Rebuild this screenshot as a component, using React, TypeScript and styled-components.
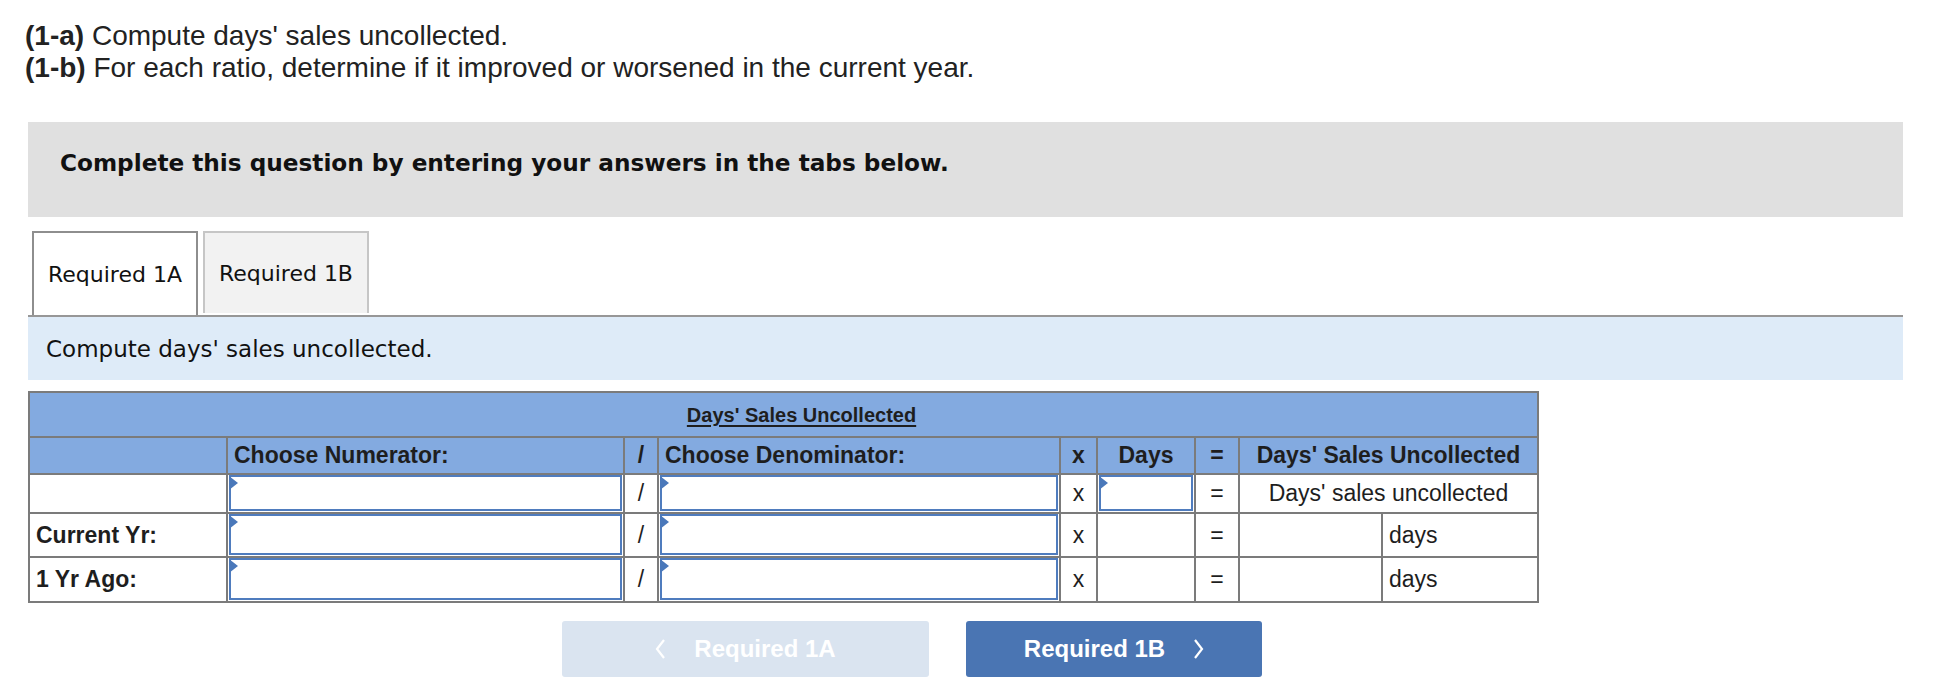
import React from "react";
import styled, { createGlobalStyle } from "styled-components";

const GlobalStyle = createGlobalStyle`
  html, body {
    margin: 0;
    padding: 0;
    background: #ffffff;
  }
  body {
    font-family: "Liberation Sans", Arial, sans-serif;
    color: #1e1e1e;
  }
`;

const Page = styled.div`
  width: 1934px;
  box-sizing: border-box;
  padding: 20px 31px 20px 28px;
`;

const Intro = styled.div`
  margin-left: -3px;
  font-size: 28px;
  line-height: 32px;
  color: #222;
`;

const Banner = styled.div`
  margin-top: 38px;
  height: 95px;
  box-sizing: border-box;
  padding: 27px 32px 0;
  background: #e0e0e0;
  font-family: "DejaVu Sans", Verdana, sans-serif;
  font-weight: bold;
  font-size: 23.2px;
  line-height: 27px;
  color: #111;
`;

const TabBar = styled.div`
  margin-top: 14px;
  display: flex;
  align-items: flex-end;
  gap: 5px;
  padding-left: 4px;
  border-bottom: 2px solid #979797;
`;

const Tab = styled.div<{ $active?: boolean }>`
  height: ${(p) => (p.$active ? 84 : 82)}px;
  box-sizing: border-box;
  display: flex;
  align-items: center;
  padding: 0 14px;
  margin-bottom: ${(p) => (p.$active ? 0 : 2)}px;
  font-family: "DejaVu Sans", Verdana, sans-serif;
  font-size: 22px;
  color: #111;
  background: ${(p) => (p.$active ? "#ffffff" : "#f2f2f2")};
  border: 2px solid ${(p) => (p.$active ? "#8e8e8e" : "#c6c6c6")};
  border-bottom: none;
`;

const Instruction = styled.div`
  height: 63px;
  display: flex;
  align-items: center;
  padding-left: 18px;
  background: #deebf8;
  font-family: "DejaVu Sans", Verdana, sans-serif;
  font-size: 23px;
  color: #111;
`;

const Table = styled.table`
  margin-top: 11px;
  border-collapse: collapse;
  table-layout: fixed;
  width: 1509px;
  font-size: 23px;
  color: #1e1e1e;
`;

const Head = styled.td<{ $align?: string }>`
  background: #83aae0;
  border: 2px solid #7b7b7b;
  font-weight: bold;
  text-align: ${(p) => p.$align || "center"};
  padding: 0 6px;
  white-space: nowrap;
`;

const Title = styled.span`
  font-size: 20px;
  text-decoration: underline;
  text-underline-offset: 3px;
  margin-left: 36px;
`;

const Cell = styled.td<{ $align?: string; $bold?: boolean }>`
  border: 2px solid #7b7b7b;
  background: #ffffff;
  text-align: ${(p) => p.$align || "center"};
  font-weight: ${(p) => (p.$bold ? "bold" : "normal")};
  padding: 0 6px;
  white-space: nowrap;
`;

const InputCell = styled.td`
  border: 2px solid #7b7b7b;
  padding: 0 1px;
  background: #ffffff;
  vertical-align: top;
`;

const Field = styled.div<{ $h: number }>`
  position: relative;
  height: ${(p) => p.$h}px;
  box-sizing: border-box;
  border: 2px solid #4f7cbe;
  background: #ffffff;

  &::before {
    content: "";
    position: absolute;
    top: -1px;
    left: -2px;
    border-left: 9px solid #4a78ba;
    border-top: 7px solid transparent;
    border-bottom: 7px solid transparent;
  }
`;

const Row = styled.tr<{ $h: number }>`
  height: ${(p) => p.$h}px;
`;

const Nav = styled.div`
  margin-top: 18px;
  padding-left: 534px;
  display: flex;
  gap: 37px;
`;

const NavButton = styled.div<{ $disabled?: boolean; $w: number }>`
  width: ${(p) => p.$w}px;
  height: 56px;
  border-radius: 3px;
  display: flex;
  align-items: center;
  justify-content: center;
  gap: 28px;
  background: ${(p) => (p.$disabled ? "#dae4f0" : "#4a75b3")};
  color: #ffffff;
  font-weight: bold;
  font-size: 24px;
`;

const Chevron = ({ dir }: { dir: "left" | "right" }) => (
  <svg width="11" height="22" viewBox="0 0 11 22">
    <polyline
      points={dir === "left" ? "9,2 2,11 9,20" : "2,2 9,11 2,20"}
      fill="none"
      stroke="#ffffff"
      strokeWidth="2.2"
    />
  </svg>
);

const Input = ({ h }: { h: number }) => (
  <InputCell>
    <Field $h={h} />
  </InputCell>
);

const widths = [198, 397, 34, 402, 37, 98, 44, 143, 156];

const App = () => {
  return (
    <>
      <GlobalStyle />
      <Page>
        <Intro>
          <div>
            <b>(1-a)</b> Compute days' sales uncollected.
          </div>
          <div>
            <b>(1-b)</b> For each ratio, determine if it improved or worsened in the current year.
          </div>
        </Intro>

        <Banner>Complete this question by entering your answers in the tabs below.</Banner>

        <TabBar>
          <Tab $active>Required 1A</Tab>
          <Tab>Required 1B</Tab>
        </TabBar>

        <Instruction>Compute days' sales uncollected.</Instruction>

        <Table>
          <colgroup>
            {widths.map((w, i) => (
              <col key={i} style={{ width: w }} />
            ))}
          </colgroup>
          <tbody>
            <Row $h={45}>
              <Head colSpan={9}>
                <Title>Days' Sales Uncollected</Title>
              </Head>
            </Row>
            <Row $h={37}>
              <Head />
              <Head $align="left">Choose Numerator:</Head>
              <Head>/</Head>
              <Head $align="left">Choose Denominator:</Head>
              <Head>x</Head>
              <Head>Days</Head>
              <Head>=</Head>
              <Head colSpan={2}>Days' Sales Uncollected</Head>
            </Row>
            <Row $h={39}>
              <Cell />
              <Input h={36} />
              <Cell>/</Cell>
              <Input h={36} />
              <Cell>x</Cell>
              <Input h={36} />
              <Cell>=</Cell>
              <Cell colSpan={2}>Days' sales uncollected</Cell>
            </Row>
            <Row $h={44}>
              <Cell $align="left" $bold>
                Current Yr:
              </Cell>
              <Input h={41} />
              <Cell>/</Cell>
              <Input h={41} />
              <Cell>x</Cell>
              <Cell />
              <Cell>=</Cell>
              <Cell />
              <Cell $align="left">days</Cell>
            </Row>
            <Row $h={45}>
              <Cell $align="left" $bold>
                1 Yr Ago:
              </Cell>
              <Input h={42} />
              <Cell>/</Cell>
              <Input h={42} />
              <Cell>x</Cell>
              <Cell />
              <Cell>=</Cell>
              <Cell />
              <Cell $align="left">days</Cell>
            </Row>
          </tbody>
        </Table>

        <Nav>
          <NavButton $disabled $w={367}>
            <Chevron dir="left" />
            <span>Required 1A</span>
          </NavButton>
          <NavButton $w={296}>
            <span>Required 1B</span>
            <Chevron dir="right" />
          </NavButton>
        </Nav>
      </Page>
    </>
  );
};

export default App;
